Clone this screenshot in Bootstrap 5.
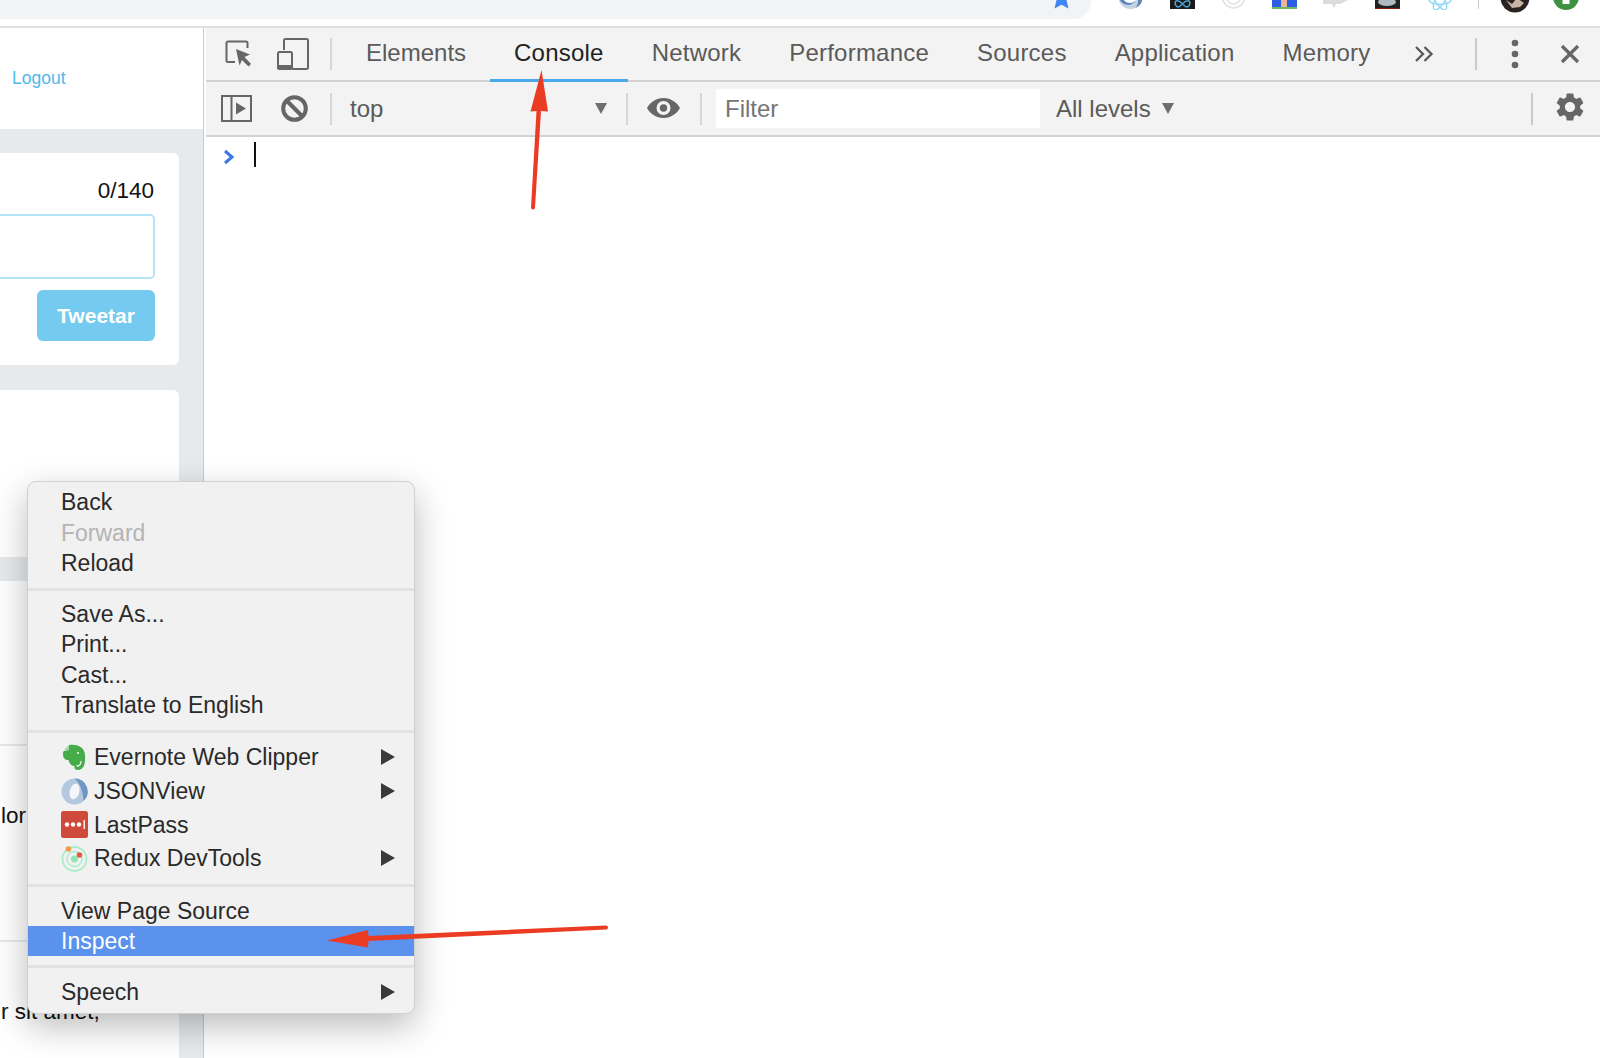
<!DOCTYPE html>
<html lang="en">
<head>
<meta charset="utf-8">
<title>Inspect console</title>
<link href="https://cdn.jsdelivr.net/npm/bootstrap@5.3.0/dist/css/bootstrap.min.css" rel="stylesheet">
<style>
html,body{height:100%;}
body{overflow:hidden;background:#fff;font-family:"Liberation Sans",Arial,sans-serif;position:relative;width:1600px;height:1058px;}
.chrome-bar{height:28px;border-bottom:2px solid #dfdfdf;overflow:hidden;background:#fff;}
.addr{width:1091px;height:19px;background:#f1f3f4;border-bottom-right-radius:18px;flex:none;padding-right:21px;}
.ext{flex:none;display:block;}
.chrome-sep{width:1px;height:9px;background:#c8c8c8;flex:none;}
.workspace{height:1030px;}
.page-pane{width:203px;flex:none;background:#e6eaed;overflow:hidden;}
.pane-head{height:101px;background:#fff;padding-left:12px;}
.pane-head a{color:#4fb9ea;font-size:17.5px;text-decoration:none;}
.tw-card{width:179px;background:#fff;border-radius:0 6px 6px 0;}
.tw-compose{height:212px;margin-top:24px;padding:24px 24px 0 0;}
.counter{font-size:22.5px;line-height:28px;color:#111;padding-right:1px;}
.tw-input{height:65px;margin-top:9px;border:2px solid #b5e4f7;border-left:0;border-radius:0 5px 5px 0;background:#fff;}
.tw-btn{width:118px;height:51px;margin-top:11px;background:#75cbef;border:0;border-radius:6px;color:#fff;font-weight:700;font-size:21px;padding:0;}
.tw-blank{height:167px;margin-top:25px;}
.tw-list{margin-top:24px;height:480px;border-radius:0 6px 0 0;}
.tw-row{border-bottom:2px solid #e6eaed;overflow:hidden;}
.tw-row.first{height:165px;}
.tw-row.mid{height:196px;padding-top:58px;}
.tw-row.last{height:120px;padding-top:58px;border-bottom:0;}
.tw-text{font-size:22.5px;line-height:24px;color:#111;white-space:nowrap;margin:0;padding-left:1px;}
.devtools{border-left:1px solid #c9c9c9;padding-left:2px;}
.dt-bar{background:#f3f3f3;color:#5a5a5a;font-size:24px;border-bottom:2px solid #d2d2d2;}
.dt-tabs{height:54px;}
.dt-filters{height:55px;}
.dt-ico{flex:none;display:block;}
.dt-sep{width:2px;height:32px;background:#d6d6d6;flex:none;}
.dt-sep.strong{background:#c9c9c9;}
.dt-tab{display:block;color:#5a5a5a;padding:0 24px;height:54px;line-height:50px;font-size:24px;letter-spacing:.22px;text-decoration:none;border-bottom:3px solid transparent;margin-bottom:-2px;}
.dt-tab.tab-lead{letter-spacing:0;}
.dt-tab.is-on{color:#222;border-bottom-color:#4aa8ec;}
.dt-tab:hover{color:#5a5a5a;}
.ctx-select{width:257px;margin-left:18px;}
.tri{width:0;height:0;border-left:6.5px solid transparent;border-right:6.5px solid transparent;border-top:11px solid #6e6e6e;flex:none;}
.filter-box{width:324px;height:39px;flex:none;border:0;border-radius:0;background:#fff;font-size:24px;padding:0 9px;color:#555;box-shadow:none;}
.filter-box::placeholder{color:#757575;opacity:1;}
.console-body{padding:5px 0 0 17px;}
.caret-bar{width:2px;height:25px;background:#111;margin-left:19px;}
.ctx-menu{left:27px;top:481px;width:388px;background:#f1f1f1;border:1px solid #d0d0d0;border-radius:9px;box-shadow:0 12px 34px rgba(0,0,0,.27);padding:5px 0 6px;font-size:23px;color:#2a2a2a;z-index:5;}
.ctx-item{display:flex;align-items:center;height:30.5px;padding:0 19px 0 33px;color:#2a2a2a;background:transparent;font-size:23px;line-height:30px;}
.ctx-item.tall{height:33.7px;}
.ctx-item:hover{background:transparent;color:#2a2a2a;}
.ctx-item.off{color:#b4b4b4;}
.ctx-item.hot,.ctx-item.hot:hover{background:#5a92ee;color:#fff;}
.ctx-sep{height:3px;background:#e2e2e2;margin:9px 0 8px;border:0;opacity:1;}
.ctx-ico{width:27px;height:27px;margin-right:6px;flex:none;}
.sub-tri{margin-left:auto;width:0;height:0;border-top:8px solid transparent;border-bottom:8px solid transparent;border-left:14px solid #3a3a3a;flex:none;}
.arrows{left:0;top:0;z-index:6;pointer-events:none;}
</style>
</head>
<body>
<header class="chrome-bar d-flex align-items-start">
  <div class="addr d-flex justify-content-end align-items-start">
    <svg class="ext" width="17" height="9" viewBox="0 0 17 9"><path d="M3.500 0H13.500L15.500 8.500 8.500 4.800 1.500 8.500Z" fill="#4285f4"/></svg>
  </div>
  <div class="d-flex align-items-start">
    <svg class="ext" style="margin-left:27px" width="25" height="10" viewBox="0 0 25 10"><circle cx="12.500" cy="-3" r="12" fill="#c3d2e4"/><path d="M24.500-3a12 12 0 0 1-7 11C20 5 20.500 1 20-3Z" fill="#5d84b5"/><circle cx="10" cy="-4" r="9" fill="#5d84b5"/><circle cx="12" cy="-5" r="8" fill="#fff"/></svg>
    <svg class="ext" style="margin-left:27px" width="25" height="10" viewBox="0 0 25 10"><rect width="25" height="9" fill="#1a1a1a"/><path d="M6 1c3-1 5 1 6.500 3C14 2 16 0 19 1c2 2 0 6-2 6-2 0-3-2-4.500-3C11 5 10 7 8 7 6 7 4 3 6 1Z" fill="none" stroke="#4aa6d8" stroke-width="1.500"/></svg>
    <svg class="ext" style="margin-left:27px" width="23" height="10" viewBox="0 0 23 10"><circle cx="11.500" cy="-3" r="11" fill="none" stroke="#e2e2e2" stroke-width="1.600"/><circle cx="11.500" cy="-3" r="7" fill="none" stroke="#e4e4e4" stroke-width="1.600"/></svg>
    <svg class="ext" style="margin-left:27px" width="25" height="10" viewBox="0 0 25 10"><rect width="25" height="9" fill="#2b5ce6"/><rect x="9" width="6" height="7" fill="#e9b49a"/><rect y="7" width="25" height="2" fill="#6cbb5a"/></svg>
    <svg class="ext" style="margin-left:26px" width="25" height="8" viewBox="0 0 25 8"><path d="M0 0H25L17 4H13L11 8 9 4H0Z" fill="#dcdcdc"/></svg>
    <svg class="ext" style="margin-left:27px" width="25" height="10" viewBox="0 0 25 10"><rect width="25" height="9" fill="#222"/><ellipse cx="12" cy="2" rx="9" ry="4" fill="#aeb9c0"/><rect y="8" width="25" height="1" fill="#8a1f10"/></svg>
    <svg class="ext" style="margin-left:28px" width="24" height="10" viewBox="0 0 24 10"><g fill="none" stroke="#8ed8f8" stroke-width="1.300"><ellipse cx="12" cy="0" rx="11" ry="4.500"/><ellipse cx="12" cy="0" rx="11" ry="4.500" transform="rotate(60 12 0)"/><ellipse cx="12" cy="0" rx="11" ry="4.500" transform="rotate(120 12 0)"/></g></svg>
    <span class="chrome-sep" style="margin-left:26px"></span>
    <svg class="ext" style="margin-left:21px" width="30" height="13" viewBox="0 0 30 13"><circle cx="15" cy="-2" r="14.500" fill="#2a2220"/><path d="M6 0 12 4 17-2 24 3 20 7 12 8Z" fill="#c9b3a2"/></svg>
    <svg class="ext" style="margin-left:23px" width="26" height="10" viewBox="0 0 26 10"><circle cx="13" cy="-3" r="13" fill="#3f9142"/><rect x="9.500" y="-3" width="7" height="7" fill="#fff"/></svg>
  </div>
</header>

<main class="workspace d-flex">
  <section class="page-pane">
    <div class="pane-head d-flex align-items-center"><a href="#">Logout</a></div>
    <div class="tw-card tw-compose">
      <div class="counter text-end">0/140</div>
      <div class="tw-input"></div>
      <div class="text-end"><button class="btn tw-btn" type="button">Tweetar</button></div>
    </div>
    <div class="tw-card tw-blank"></div>
    <div class="tw-card tw-list">
      <div class="tw-row first"></div>
      <div class="tw-row mid"><p class="tw-text">lor</p></div>
      <div class="tw-row last"><p class="tw-text">r sit amet,</p></div>
    </div>
  </section>

  <section class="devtools flex-grow-1 d-flex flex-column">
    <div class="dt-bar dt-tabs d-flex align-items-center">
      <svg class="dt-ico" style="margin-left:19px" width="28" height="28" viewBox="0 0 28 28" fill="none"><path d="M10 22H3a1.500 1.500 0 0 1-1.500-1.500V3A1.500 1.500 0 0 1 3 1.500h18A1.500 1.500 0 0 1 22.500 3v5" stroke="#666" stroke-width="2"/><path d="M11 9 25 14.500 19.500 17 26 24 23.500 26.500 17 20 14.500 25.500Z" fill="#666"/></svg>
      <svg class="dt-ico" style="margin-left:24px" width="32" height="32" viewBox="0 0 32 32" fill="none" stroke="#666" stroke-width="2"><path d="M7 12V2.500A1.500 1.500 0 0 1 8.500 1H29.500A1.500 1.500 0 0 1 31 2.500V29.500A1.500 1.500 0 0 1 29.500 31H15"/><rect x="1" y="14" width="14" height="17" rx="1.500"/><path d="M1 28.500H15" stroke-width="3"/></svg>
      <span class="dt-sep" style="margin-left:21px"></span>
      <nav class="nav flex-nowrap" style="margin-left:10px">
        <a class="dt-tab tab-lead" href="#">Elements</a>
        <a class="dt-tab is-on" href="#">Console</a>
        <a class="dt-tab" href="#">Network</a>
        <a class="dt-tab" href="#">Performance</a>
        <a class="dt-tab" href="#">Sources</a>
        <a class="dt-tab" href="#">Application</a>
        <a class="dt-tab" href="#">Memory</a>
      </nav>
      <svg class="dt-ico" style="margin-left:20px" width="20" height="16" viewBox="0 0 20 16" fill="none" stroke="#5a5a5a" stroke-width="2.300"><path d="M2 1 9 8 2 15M10.500 1 17.500 8 10.500 15"/></svg>
      <span class="dt-sep strong ms-auto"></span>
      <svg class="dt-ico" style="margin-left:34px" width="8" height="30" viewBox="0 0 8 30" fill="#666"><circle cx="4" cy="4" r="3.300"/><circle cx="4" cy="15" r="3.300"/><circle cx="4" cy="26" r="3.300"/></svg>
      <svg class="dt-ico" style="margin-left:41px;margin-right:20px" width="20" height="20" viewBox="0 0 20 20" stroke="#666" stroke-width="3.200"><path d="M2 2 18 18M18 2 2 18"/></svg>
    </div>
    <div class="dt-bar dt-filters d-flex align-items-center">
      <svg class="dt-ico" style="margin-left:15px" width="31" height="27" viewBox="0 0 31 27" fill="none" stroke="#666" stroke-width="2"><rect x="1" y="1" width="29" height="25"/><path d="M10.500 1V26"/><path d="M15 7.500 25 13.500 15 19.500Z" fill="#666" stroke="none"/></svg>
      <svg class="dt-ico" style="margin-left:29px" width="27" height="27" viewBox="0 0 27 27" fill="none" stroke="#666" stroke-width="4"><circle cx="13.500" cy="13.500" r="11.300"/><path d="M5.500 5.500 21.500 21.500"/></svg>
      <span class="dt-sep" style="margin-left:22px"></span>
      <div class="ctx-select d-flex align-items-center justify-content-between"><span>top</span><span class="tri"></span></div>
      <span class="dt-sep" style="margin-left:19px"></span>
      <svg class="dt-ico" style="margin-left:19px;margin-bottom:1px" width="33" height="20" viewBox="0 0 33 20" fill="#666"><path fill-rule="evenodd" d="M16.500 0C24 0 30 4.500 33 10 30 15.500 24 20 16.500 20S3 15.500 0 10C3 4.500 9 0 16.500 0ZM16.500 3A7 7 0 1 0 16.500 17 7 7 0 0 0 16.500 3Z"/><circle cx="16.500" cy="10" r="3.700"/></svg>
      <span class="dt-sep" style="margin-left:20px"></span>
      <input class="form-control filter-box" style="margin-left:14px" type="text" placeholder="Filter" aria-label="Filter">
      <span style="margin-left:16px">All levels</span>
      <span class="tri" style="margin-left:11px"></span>
      <span class="dt-sep strong ms-auto"></span>
      <svg class="dt-ico" style="margin-left:20px;margin-right:13px;margin-bottom:3px" width="34" height="34" viewBox="0 0 24 24" fill="#666"><path d="M19.140 12.940c.04-.3.06-.61.06-.94 0-.32-.02-.64-.07-.94l2.030-1.580a.49.49 0 0 0 .12-.61l-1.920-3.320a.488.488 0 0 0-.59-.22l-2.390.96c-.5-.38-1.030-.7-1.620-.94l-.36-2.540a.484.484 0 0 0-.48-.41h-3.840c-.24 0-.43.17-.47.41l-.36 2.540c-.59.24-1.130.57-1.620.94l-2.390-.96c-.22-.08-.47 0-.59.22L2.740 8.870c-.12.21-.08.47.12.61l2.030 1.580c-.05.3-.09.63-.09.94s.02.64.07.94l-2.030 1.580a.49.49 0 0 0-.12.61l1.920 3.320c.12.22.37.29.59.22l2.390-.96c.5.38 1.030.7 1.620.94l.36 2.540c.05.24.24.41.48.41h3.840c.24 0 .44-.17.47-.41l.36-2.540c.59-.24 1.130-.56 1.620-.94l2.390.96c.22.08.47 0 .59-.22l1.920-3.320c.12-.22.07-.47-.12-.61l-2.010-1.580zM12 15.600c-1.980 0-3.600-1.620-3.600-3.600s1.620-3.600 3.600-3.600 3.600 1.620 3.600 3.600-1.620 3.600-3.600 3.600z"/></svg>
    </div>
    <div class="console-body d-flex align-items-center align-self-start">
      <svg class="mt-1" width="12" height="16" viewBox="0 0 12 16" fill="none" stroke="#3b78e7" stroke-width="3"><path d="M2 2 9 8 2 14"/></svg>
      <span class="caret-bar"></span>
    </div>
  </section>
</main>

<ul class="dropdown-menu show ctx-menu list-unstyled">
  <li><span class="dropdown-item ctx-item">Back</span></li>
  <li><span class="dropdown-item ctx-item off">Forward</span></li>
  <li><span class="dropdown-item ctx-item">Reload</span></li>
  <li><hr class="ctx-sep"></li>
  <li><span class="dropdown-item ctx-item">Save As...</span></li>
  <li><span class="dropdown-item ctx-item">Print...</span></li>
  <li><span class="dropdown-item ctx-item">Cast...</span></li>
  <li><span class="dropdown-item ctx-item">Translate to English</span></li>
  <li><hr class="ctx-sep"></li>
  <li><span class="dropdown-item ctx-item tall"><svg class="ctx-ico" viewBox="0 0 27 27"><path d="M8 1C12 0 18 1 21 4 24 7 24.500 12 24 16 24 21 22 26 17 26 14 26 13 24 13.500 22 10 22 8 19 7.500 16 4 16 2 14 2 10 2 8 2.500 7 3 7L8 6Z" fill="#46ac4a"/><path d="M20 17c0 2-.5 4-2.500 5-1 .5-1.500 0-1.500-1" fill="none" stroke="#f1f1f1" stroke-width="1.300"/><path d="M8 1V6H3Z" fill="#a5d9a6"/><circle cx="17" cy="9" r="1.100" fill="#f1f1f1"/></svg>Evernote Web Clipper<span class="sub-tri"></span></span></li>
  <li><span class="dropdown-item ctx-item tall"><svg class="ctx-ico" viewBox="0 0 27 27"><circle cx="13.500" cy="13.500" r="13" fill="#b3c7de"/><path d="M13.500.5a13 13 0 0 1 9 22.500C22 14 20 6 13.500.5Z" fill="#6f96c4"/><ellipse cx="13.500" cy="13.500" rx="4.800" ry="8" fill="#f4f6f8" transform="rotate(15 13.500 13.500)"/></svg>JSONView<span class="sub-tri"></span></span></li>
  <li><span class="dropdown-item ctx-item tall"><svg class="ctx-ico" viewBox="0 0 27 27"><rect width="27" height="27" rx="2.500" fill="#cf4a3a"/><g fill="#fff"><circle cx="6" cy="13.500" r="2.200"/><circle cx="12" cy="13.500" r="2.200"/><circle cx="18" cy="13.500" r="2.200"/><rect x="22.500" y="9" width="1.400" height="9"/></g></svg>LastPass</span></li>
  <li><span class="dropdown-item ctx-item tall"><svg class="ctx-ico" viewBox="0 0 27 27" fill="none"><circle cx="13.500" cy="14" r="12" stroke="#a8eec9" stroke-width="1.800"/><circle cx="13.500" cy="14" r="7.500" stroke="#a8eec9" stroke-width="1.400"/><circle cx="13.500" cy="14" r="3.500" fill="#8fe6b4"/><circle cx="7.500" cy="4" r="2.800" fill="#ef9a4e"/><circle cx="18.500" cy="10" r="2.800" fill="#e8583c"/></svg>Redux DevTools<span class="sub-tri"></span></span></li>
  <li><hr class="ctx-sep"></li>
  <li><span class="dropdown-item ctx-item">View Page Source</span></li>
  <li><span class="dropdown-item ctx-item hot">Inspect</span></li>
  <li><hr class="ctx-sep"></li>
  <li><span class="dropdown-item ctx-item">Speech<span class="sub-tri"></span></span></li>
</ul>

<svg class="arrows position-absolute" width="1600" height="1058" viewBox="0 0 1600 1058" aria-hidden="true">
  <path d="M541.500 70 548 111.500 541 111 535 207.500A2 2 0 0 1 531 207.500L536.500 111 530.500 111.500Z" fill="#ec3b23"/>
  <path d="M327 940.500 368 930 368.500 936 606 925.500A2 2 0 0 1 606 929.500L368.500 941 368 947.500Z" fill="#ec3b23"/>
</svg>
</body>
</html>
